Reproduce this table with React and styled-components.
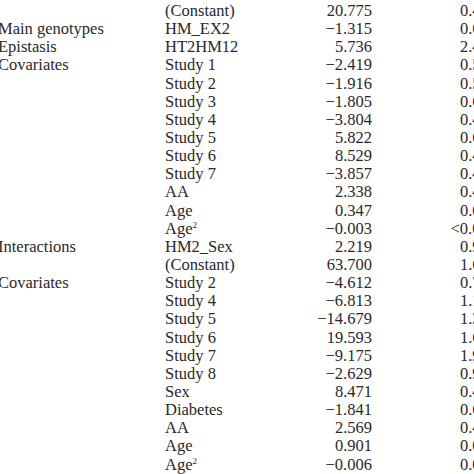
import React from "react";
import styled, { createGlobalStyle } from "styled-components";

const GlobalStyle = createGlobalStyle`
  html, body {
    margin: 0;
    padding: 0;
    background: #ffffff;
    overflow: hidden;
  }
`;

const rows = [
  { group: "", term: "(Constant)", est: "20.775", se: "0.412" },
  { group: "Main genotypes", term: "HM_EX2", est: "−1.315", se: "0.604" },
  { group: "Epistasis", term: "HT2HM12", est: "5.736", se: "2.418" },
  { group: "Covariates", term: "Study 1", est: "−2.419", se: "0.517" },
  { group: "", term: "Study 2", est: "−1.916", se: "0.522" },
  { group: "", term: "Study 3", est: "−1.805", se: "0.608" },
  { group: "", term: "Study 4", est: "−3.804", se: "0.471" },
  { group: "", term: "Study 5", est: "5.822", se: "0.693" },
  { group: "", term: "Study 6", est: "8.529", se: "0.458" },
  { group: "", term: "Study 7", est: "−3.857", se: "0.431" },
  { group: "", term: "AA", est: "2.338", se: "0.415" },
  { group: "", term: "Age", est: "0.347", se: "0.061" },
  { group: "", term: "Age", sup: "2", est: "−0.003", se: "0.001", lt: true },
  { group: "Interactions", term: "HM2_Sex", est: "2.219", se: "0.977" },
  { group: "", term: "(Constant)", est: "63.700", se: "1.604" },
  { group: "Covariates", term: "Study 2", est: "−4.612", se: "0.719" },
  { group: "", term: "Study 4", est: "−6.813", se: "1.102" },
  { group: "", term: "Study 5", est: "−14.679", se: "1.348" },
  { group: "", term: "Study 6", est: "19.593", se: "1.601" },
  { group: "", term: "Study 7", est: "−9.175", se: "1.917" },
  { group: "", term: "Study 8", est: "−2.629", se: "0.912" },
  { group: "", term: "Sex", est: "8.471", se: "0.448" },
  { group: "", term: "Diabetes", est: "−1.841", se: "0.603" },
  { group: "", term: "AA", est: "2.569", se: "0.428" },
  { group: "", term: "Age", est: "0.901", se: "0.064" },
  { group: "", term: "Age", sup: "2", est: "−0.006", se: "0.001" },
];

const Table = styled.div`
  display: flex;
  flex-direction: column;
  padding-top: 2px;
  margin-left: -2px;
  width: 620px;
  font-family: "Liberation Serif", "Times New Roman", serif;
  font-size: 16.5px;
  color: #2b2829;
`;

const Row = styled.div`
  display: grid;
  grid-template-columns: 167px 135px 72px 125px;
  height: 18.15px;
  line-height: 18.15px;
  white-space: nowrap;
`;

const Group = styled.span``;

const Term = styled.span`
  sup {
    font-size: 9px;
    line-height: 0;
    vertical-align: 6px;
  }
`;

const Num = styled.span`
  text-align: right;
`;

export default function App() {
  return (
    <>
      <GlobalStyle />
      <Table>
        {rows.map((r, i) => (
          <Row key={i}>
            <Group>{r.group}</Group>
            <Term>
              {r.term}
              {r.sup && <sup>{r.sup}</sup>}
            </Term>
            <Num>{r.est}</Num>
            <Num>{r.lt ? "<" + r.se : r.se}</Num>
          </Row>
        ))}
      </Table>
    </>
  );
}
